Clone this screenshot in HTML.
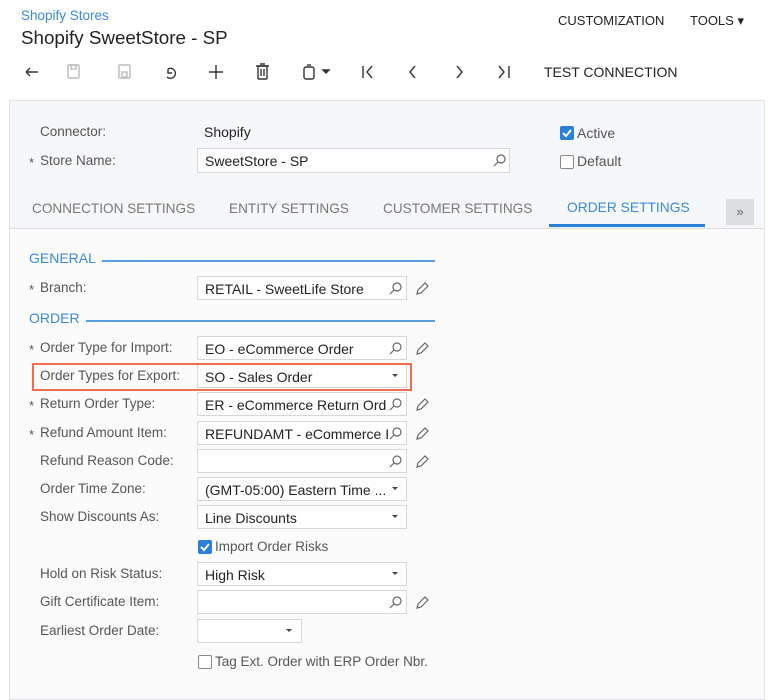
<!DOCTYPE html>
<html><head><meta charset="utf-8"><style>
*{box-sizing:border-box;margin:0;padding:0}
body{width:768px;height:689px;background:#fff;font-family:"Liberation Sans",sans-serif;color:#222;position:relative;overflow:hidden;font-size:14px}
.a{position:absolute;white-space:nowrap}
.panel{position:absolute;left:9px;top:100px;width:756px;height:600px;border:1px solid #e2e4e8;background:#f6f7f9}
.content{position:absolute;left:10px;top:228px;width:754px;height:470px;background:#fbfbfc;border-top:1px solid #d9dce0}
.lbl{color:#555;font-size:13.5px}
.star{color:#555;font-size:13px}
.in{position:absolute;left:197px;width:210px;height:24px;border:1px solid #d4d7dc;background:#fff;font-size:14px;padding:4px 0 0 7px;overflow:hidden;white-space:nowrap;color:#222}
.sec{color:#3a8ad6;font-size:14px}
.ln{position:absolute;height:1.5px;background:#5aa0e0}
.tab{color:#777;font-size:13.6px}
.ico{position:absolute}
.cb{position:absolute;width:14px;height:14px;border:1px solid #888;border-radius:2px;background:#fff}
.cbx{background:#2a7fd8;border-color:#2a7fd8}
</style></head><body>
<div class="a" style="left:21px;top:8px;color:#3a8ad6;font-size:13.5px">Shopify Stores</div>
<div class="a" style="left:21px;top:27px;font-size:18.8px;color:#222">Shopify SweetStore - SP</div>
<div class="a" style="left:558px;top:13px;font-size:13px">CUSTOMIZATION</div>
<div class="a" style="left:690px;top:13px;font-size:13px">TOOLS &#9662;</div>
<svg class="ico" style="left:20px;top:60px" width="500" height="24" viewBox="0 0 500 24" fill="none" stroke="#333" stroke-width="1.4">
<path d="M6 12h12M6 12l4-4M6 12l4 4"/>
<g stroke="#bbb"><rect x="48" y="5" width="11" height="13" rx="1"/><rect x="51" y="5" width="5" height="4"/></g>
<g stroke="#bbb"><rect x="99" y="5" width="11" height="13" rx="1"/><rect x="102" y="12" width="5" height="5"/></g>
<path d="M148 9a5 5 0 1 1 -1 8M148 9v4h4"/>
<path d="M196 5v14M189 12h14"/>
<rect x="238" y="6" width="9" height="13" rx="1"/><path d="M236 6h13M240 4h5M241 9v7M244 9v7"/>
<rect x="284" y="7" width="10" height="12" rx="2"/><path d="M287 5h4"/>
<path d="M303 10l3 3 3-3z" fill="#333"/>
<path d="M343 6v12M352 6l-5 6 5 6"/>
<path d="M395 6l-5 6 5 6"/>
<path d="M437 6l5 6-5 6"/>
<path d="M479 6l5 6-5 6M489 6v12"/>
</svg>
<div class="a" style="left:544px;top:64px;font-size:14px">TEST CONNECTION</div>

<div class="panel"></div>
<div class="a lbl" style="left:40px;top:124px">Connector:</div>
<div class="a" style="left:204px;top:124px;font-size:14px">Shopify</div>
<div class="a star" style="left:29px;top:155px">*</div>
<div class="a lbl" style="left:40px;top:153px">Store Name:</div>
<div class="in" style="left:197px;top:148px;width:313px;height:25px">SweetStore - SP</div>
<svg class="ico" style="left:493px;top:153px" width="14" height="14" fill="none" stroke="#666" stroke-width="1.2"><circle cx="8" cy="6" r="4"/><path d="M5 9l-4 4"/></svg>
<div class="cb cbx" style="left:560px;top:126px"></div>
<svg class="ico" style="left:560px;top:126px" width="14" height="14" fill="none" stroke="#fff" stroke-width="2"><path d="M3 7l3 3 5-6"/></svg>
<div class="a" style="left:577px;top:125px;color:#555;font-size:14px">Active</div>
<div class="cb" style="left:560px;top:155px"></div>
<div class="a" style="left:577px;top:153px;color:#555;font-size:14px">Default</div>

<div class="a tab" style="left:32px;top:201px">CONNECTION SETTINGS</div>
<div class="a tab" style="left:229px;top:201px">ENTITY SETTINGS</div>
<div class="a tab" style="left:383px;top:201px">CUSTOMER SETTINGS</div>
<div class="a" style="left:567px;top:200px;color:#3a8ad6;font-size:13.8px">ORDER SETTINGS</div>
<div class="a" style="left:549px;top:224px;width:156px;height:3px;background:#2a7fd8"></div>
<div class="a" style="left:726px;top:199px;width:28px;height:26px;background:#dcdde0;color:#666;font-size:13px;text-align:center;line-height:26px">&raquo;</div>

<div class="content"></div>
<div class="a sec" style="left:29px;top:250px">GENERAL</div><div class="ln" style="left:102px;top:260px;width:333px"></div>
<div class="a sec" style="left:29px;top:310px">ORDER</div><div class="ln" style="left:86px;top:320px;width:349px"></div>

<div class="a star" style="left:29px;top:282px">*</div><div class="a lbl" style="left:40px;top:280px">Branch:</div>
<div class="in" style="top:276px">RETAIL - SweetLife Store</div>
<div class="a star" style="left:29px;top:342px">*</div><div class="a lbl" style="left:40px;top:340px">Order Type for Import:</div>
<div class="in" style="top:336px">EO - eCommerce Order</div>
<div class="a lbl" style="left:40px;top:368px">Order Types for Export:</div>
<div class="in" style="top:364px">SO - Sales Order</div>
<div class="a" style="left:32px;top:363px;width:380px;height:28px;border:2px solid #ef6e4f"></div>
<div class="a star" style="left:29px;top:398px">*</div><div class="a lbl" style="left:40px;top:396px">Return Order Type:</div>
<div class="in" style="top:392px">ER - eCommerce Return Ord</div>
<div class="a star" style="left:29px;top:427px">*</div><div class="a lbl" style="left:40px;top:425px">Refund Amount Item:</div>
<div class="in" style="top:421px">REFUNDAMT - eCommerce I</div>
<div class="a lbl" style="left:40px;top:453px">Refund Reason Code:</div>
<div class="in" style="top:449px"></div>
<div class="a lbl" style="left:40px;top:481px">Order Time Zone:</div>
<div class="in" style="top:477px">(GMT-05:00) Eastern Time ...</div>
<div class="a lbl" style="left:40px;top:509px">Show Discounts As:</div>
<div class="in" style="top:505px">Line Discounts</div>
<div class="cb cbx" style="left:198px;top:540px"></div>
<svg class="ico" style="left:198px;top:540px" width="14" height="14" fill="none" stroke="#fff" stroke-width="2"><path d="M3 7l3 3 5-6"/></svg>
<div class="a" style="left:215px;top:539px;color:#555;font-size:13.5px">Import Order Risks</div>
<div class="a lbl" style="left:40px;top:566px">Hold on Risk Status:</div>
<div class="in" style="top:562px">High Risk</div>
<div class="a lbl" style="left:40px;top:594px">Gift Certificate Item:</div>
<div class="in" style="top:590px"></div>
<div class="a lbl" style="left:40px;top:623px">Earliest Order Date:</div>
<div class="in" style="top:619px;width:105px"></div>
<div class="cb" style="left:198px;top:655px"></div>
<div class="a" style="left:215px;top:654px;color:#555;font-size:13.5px">Tag Ext. Order with ERP Order Nbr.</div>

<svg class="ico" style="left:0;top:0" width="768" height="689" fill="none" stroke="#666" stroke-width="1.2">
<defs>
<g id="s"><circle cx="8" cy="6" r="4"/><path d="M5 9l-4 4"/></g>
<g id="p"><path d="M2 13l1-4 7-7 3 3-7 7z"/></g>
</defs>
<use href="#s" x="389" y="281"/><use href="#p" x="415" y="281"/>
<use href="#s" x="389" y="341"/><use href="#p" x="415" y="341"/>
<use href="#s" x="389" y="397"/><use href="#p" x="415" y="397"/>
<use href="#s" x="389" y="426"/><use href="#p" x="415" y="426"/>
<use href="#s" x="389" y="454"/><use href="#p" x="415" y="454"/>
<use href="#s" x="389" y="595"/><use href="#p" x="415" y="595"/>
<g fill="#444" stroke="none">
<path d="M392 374h6l-3 3z"/><path d="M392 487h6l-3 3z"/><path d="M392 515h6l-3 3z"/><path d="M392 572h6l-3 3z"/><path d="M286 629h6l-3 3z"/>
</g>
</svg>
</body></html>
